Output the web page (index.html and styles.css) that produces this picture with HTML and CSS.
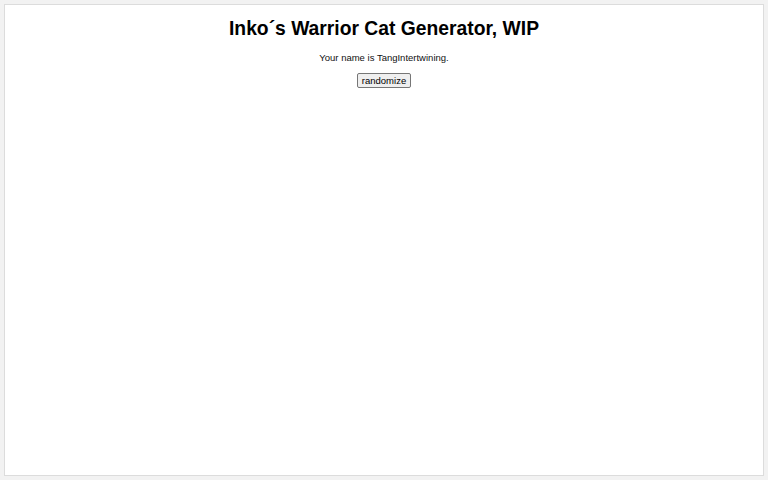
FILE: index.html
```html
<!DOCTYPE html>
<html lang="en">
<head>
    <meta charset="UTF-8">
    <title>Inko´s Warrior Cat Generator</title>
    <link rel="stylesheet" href="styles.css">
</head>
<body>
    <div class="page">
        <h1>Inko´s Warrior Cat Generator, WIP</h1>
        <p class="name">Your name is <span id="catName">TangIntertwining</span>.</p>
        <button type="button" class="randomize">randomize</button>
    </div>
</body>
</html>
```
FILE: styles.css
```css
/* Light grey backdrop around the main sheet */
body {
    margin: 0;
    padding: 4px;
    background-color: #f2f2f2;
    font-family: "Liberation Sans", Arial, sans-serif;
}

.page {
    height: 472px;
    box-sizing: border-box;
    background-color: #ffffff;
    border: 1px solid #dcdcdc;
    text-align: center;
    padding-top: 13px;
}

h1 {
    margin: 0;
    font-size: 19.3px;
    line-height: 22px;
    font-weight: bold;
    color: #000;
}

.name {
    margin: 12px 0 6px;
    font-size: 9.5px;
    line-height: 12px;
    color: #111;
}

.randomize {
    font-family: "Liberation Sans", Arial, sans-serif;
    font-size: 9.5px;
    line-height: 11px;
    padding: 1px 4px;
    border: 1px solid #767676;
    border-radius: 2px;
    background-color: #efefef;
}
```
